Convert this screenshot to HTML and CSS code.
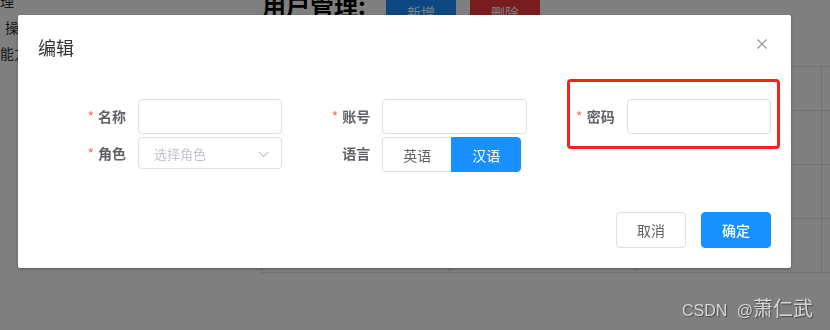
FILE: index.html
```html
<!DOCTYPE html>
<html lang="zh">
<head>
<meta charset="utf-8">
<title>编辑</title>
<link rel="stylesheet" href="styles.css">
</head>
<body>
<div class="page">
  <aside class="sidebar">
    <div class="menu-item m1">管理</div>
    <div class="menu-item m2">操作</div>
    <div class="menu-item m3">能力</div>
  </aside>
  <main class="main">
    <div class="toolbar">
      <h2 class="heading">用户管理:</h2>
      <button class="tb-btn tb-add">新增</button>
      <button class="tb-btn tb-del">删除</button>
    </div>
    <div class="table">
      <div class="tr th"><div class="td"></div><div class="td"></div><div class="td"></div><div class="td"></div></div>
      <div class="tr"><div class="td"></div><div class="td"></div><div class="td"></div><div class="td"></div></div>
      <div class="tr"><div class="td"></div><div class="td"></div><div class="td"></div><div class="td"></div></div>
      <div class="tr"><div class="td"></div><div class="td"></div><div class="td"></div><div class="td"></div></div>
    </div>
  </main>
</div>

<div class="overlay">
  <div class="dialog">
    <div class="dialog-header">
      <span class="dialog-title">编辑</span>
      <button class="dialog-close" aria-label="close">
        <svg width="10" height="10" viewBox="0 0 10 10"><path d="M0.5 0.5L9.5 9.5M9.5 0.5L0.5 9.5" stroke="#909399" stroke-width="1.2" fill="none"/></svg>
      </button>
    </div>
    <div class="dialog-body">
      <form class="form">
        <div class="form-item">
          <label class="label required">名称</label>
          <div class="control"><input class="input" type="text"></div>
        </div>
        <div class="form-item">
          <label class="label required">账号</label>
          <div class="control"><input class="input" type="text"></div>
        </div>
        <div class="form-item highlighted">
          <label class="label required">密码</label>
          <div class="control"><input class="input" type="password"></div>
          <div class="mark-box"></div>
        </div>
        <div class="form-item row2">
          <label class="label required">角色</label>
          <div class="control">
            <div class="select">
              <span class="placeholder">选择角色</span>
              <svg class="chevron" width="11" height="7" viewBox="0 0 11 7"><path d="M0.8 0.8L5.5 5.6L10.2 0.8" stroke="#c0c4cc" stroke-width="1.2" fill="none"/></svg>
            </div>
          </div>
        </div>
        <div class="form-item row2">
          <label class="label">语言</label>
          <div class="control">
            <div class="radio-group">
              <span class="radio-btn">英语</span>
              <span class="radio-btn active">汉语</span>
            </div>
          </div>
        </div>
        <div class="form-item row2"></div>
      </form>
    </div>
    <div class="dialog-footer">
      <button class="btn btn-default" type="button">取消</button>
      <button class="btn btn-primary" type="button">确定</button>
    </div>
  </div>
  <div class="watermark"><span class="wm-latin">CSDN @</span><span class="wm-cjk">萧仁武</span></div>
</div>
</body>
</html>
```

FILE: styles.css
```css
* { box-sizing: border-box; }
html, body {
  margin: 0;
  width: 830px;
  height: 330px;
  overflow: hidden;
  background: #fff;
  font-family: "Noto Sans CJK SC", "Liberation Sans", sans-serif;
}
.page {
  display: flex;
  width: 830px;
  height: 330px;
}
.sidebar {
  width: 261px;
  flex: none;
  display: flex;
  flex-direction: column;
  margin-top: -12px;
  font-size: 14px;
  color: #303133;
}
.menu-item {
  height: 26px;
  line-height: 26px;
  white-space: nowrap;
}
.m1 { margin-left: -14px; }
.m2 { margin-left: 5px; }
.m3 { margin-left: 0; }
.main {
  flex: 1;
  min-width: 0;
}
.toolbar {
  display: flex;
  align-items: flex-start;
  height: 36px;
  margin-top: -10px;
}
.heading {
  margin: 0;
  font-size: 24px;
  line-height: 30px;
  font-weight: 700;
  color: #000;
  width: 125px;
  padding-left: 1px;
}
.tb-btn {
  width: 70px;
  height: 36px;
  margin-top: 4px;
  border: none;
  border-radius: 0;
  color: #fff;
  font: 14px "Noto Sans CJK SC", sans-serif;
}
.tb-add { background: #1890ff; }
.tb-del { background: #f03a3a; margin-left: 14px; }
.table {
  margin-top: 40px;
  width: 760px;
  border-top: 1px solid #dfe3ea;
  border-left: 1px solid #dfe3ea;
}
.tr {
  display: grid;
  grid-template-columns: 188px 186px 186px 186px;
  height: 54px;
  border-bottom: 1px solid #dfe3ea;
}
.tr.th { height: 44px; }
.td { border-right: 1px solid #dfe3ea; }

.overlay {
  position: fixed;
  inset: 0;
  background: rgba(0, 0, 0, 0.5);
}
.dialog {
  position: absolute;
  left: 18px;
  top: 15px;
  width: 773px;
  background: #fff;
  border-radius: 2px;
  box-shadow: 0 1px 3px rgba(0, 0, 0, 0.3);
}
.dialog-header {
  padding: 20px 20px 10px;
  display: flex;
}
.dialog-title {
  font-size: 18px;
  line-height: 24px;
  color: #303133;
}
.dialog-close {
  position: absolute;
  top: 24px;
  right: 24px;
  width: 10px;
  height: 10px;
  padding: 0;
  border: none;
  background: none;
  display: block;
}
.dialog-close svg { display: block; }
.dialog-body {
  padding: 30px 20px;
}
.form {
  display: grid;
  grid-template-columns: repeat(3, 1fr);
  grid-template-rows: 35px 35px;
  row-gap: 3px;
  margin: 0;
}
.form-item {
  display: flex;
  align-items: flex-start;
  position: relative;
}
.label {
  width: 100px;
  flex: none;
  padding-right: 12px;
  text-align: right;
  font-size: 14px;
  font-weight: 700;
  color: #606266;
  line-height: 35px;
}
.row2 .label { line-height: 32px; }
.label.required::before {
  content: "*";
  color: #f56c6c;
  margin-right: 4px;
  font-weight: 400;
}
.control {
  flex: 1;
  min-width: 0;
}
.input {
  display: block;
  width: 100%;
  height: 35px;
  border: 1px solid #dcdfe6;
  border-radius: 4px;
  background: #fff;
  padding: 0 15px;
  font: 14px "Noto Sans CJK SC", sans-serif;
  outline: none;
}
.select {
  height: 32px;
  border: 1px solid #dcdfe6;
  border-radius: 4px;
  display: flex;
  align-items: center;
  justify-content: space-between;
  padding: 0 12px 0 15px;
}
.placeholder {
  font-size: 13px;
  color: #c0c4cc;
}
.chevron { display: block; margin-top: 3px; }
.radio-group {
  display: flex;
  width: 139px;
  height: 35px;
}
.radio-btn {
  flex: 1;
  display: flex;
  align-items: center;
  justify-content: center;
  font-size: 14px;
  color: #606266;
  border: 1px solid #dcdfe6;
}
.radio-btn:first-child {
  border-radius: 4px 0 0 4px;
  border-right: none;
}
.radio-btn.active {
  background: #1890ff;
  border-color: #1890ff;
  color: #fff;
  border-radius: 0 4px 4px 0;
}
.mark-box {
  position: absolute;
  left: 40px;
  top: -20px;
  width: 213px;
  height: 70px;
  border: 3px solid #f5231b;
  border-radius: 4px;
  pointer-events: none;
}
.dialog-footer {
  padding: 10px 20px 20px;
  display: flex;
  justify-content: flex-end;
  gap: 15px;
}
.btn {
  width: 70px;
  height: 36px;
  border-radius: 4px;
  font: 14px "Noto Sans CJK SC", sans-serif;
  padding: 0;
}
.btn-default {
  background: #fff;
  border: 1px solid #dcdfe6;
  color: #606266;
}
.btn-primary {
  background: #1890ff;
  border: 1px solid #1890ff;
  color: #fff;
  font-weight: 500;
}
.watermark {
  position: absolute;
  left: 682px;
  bottom: 6px;
  line-height: 26px;
  color: #d6d6d6;
  text-shadow: 1px 1px 1px rgba(0, 0, 0, 0.45);
  white-space: nowrap;
}
.wm-latin {
  font-family: "Liberation Sans", sans-serif;
  font-size: 16px;
  word-spacing: 5px;
}
.wm-cjk {
  font-family: "Noto Sans CJK SC", sans-serif;
  font-size: 20px;
}
```
